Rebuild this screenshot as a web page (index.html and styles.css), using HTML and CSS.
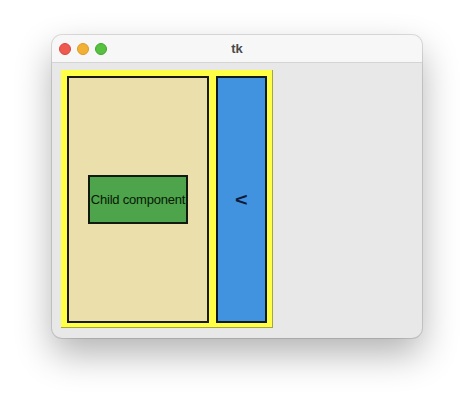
FILE: index.html
```html
<!DOCTYPE html>
<html>
<head>
<meta charset="utf-8">
<link rel="stylesheet" href="styles.css">
</head>
<body>
<div class="window">
  <div class="titlebar">
    <div class="lights">
      <span class="light red"></span>
      <span class="light amber"></span>
      <span class="light green"></span>
    </div>
    <div class="title">tk</div>
  </div>
  <div class="content">
    <div class="frame">
      <div class="panel">
        <div class="child">Child component</div>
      </div>
      <div class="side"><span class="arrow">&lt;</span></div>
    </div>
  </div>
</div>
</body>
</html>
```

FILE: styles.css
```css
html, body {
  margin: 0;
  padding: 0;
  background: #ffffff;
}
body {
  width: 474px;
  height: 407px;
  padding: 35px 0 0 52px;
  box-sizing: border-box;
  font-family: "Liberation Sans", Arial, sans-serif;
}
.window {
  width: 370px;
  height: 303px;
  border-radius: 10px;
  background: #e8e8e8;
  box-shadow: 0 0 0 1px rgba(0, 0, 0, 0.12), 0 16px 36px rgba(0, 0, 0, 0.3);
  overflow: hidden;
  display: flex;
  flex-direction: column;
}
.titlebar {
  height: 27px;
  flex: none;
  background: #f7f7f7;
  border-bottom: 1px solid #d4d4d4;
  position: relative;
  display: flex;
  align-items: center;
}
.lights {
  display: flex;
  gap: 6px;
  padding-left: 7px;
}
.light {
  width: 12px;
  height: 12px;
  border-radius: 50%;
  box-sizing: border-box;
}
.red { background: #ee5a50; border: 1px solid #d9463d; }
.amber { background: #f2b035; border: 1px solid #d99b25; }
.green { background: #56c23f; border: 1px solid #43a52f; }
.title {
  position: absolute;
  left: 0;
  right: 0;
  top: 0;
  bottom: 0;
  display: flex;
  align-items: center;
  justify-content: center;
  font-weight: bold;
  font-size: 13px;
  color: #4a4a4a;
}
.content {
  flex: 1;
  padding: 7px 0 0 9px;
}
.frame {
  width: 212px;
  height: 258px;
  box-sizing: border-box;
  background: #ffff45;
  border-right: 1px solid #a6a63a;
  border-bottom: 1px solid #a6a63a;
  padding: 6px 5px 4px 6px;
  display: flex;
  gap: 7px;
}
.panel {
  width: 142px;
  height: 247px;
  box-sizing: border-box;
  background: #ebe0ab;
  border: 2px solid #1a1a12;
  display: flex;
  align-items: center;
  justify-content: center;
}
.child {
  width: 100px;
  height: 49px;
  box-sizing: border-box;
  background: #4ea44b;
  border: 2px solid #111a10;
  display: flex;
  align-items: center;
  justify-content: center;
  font-size: 13px;
  letter-spacing: -0.2px;
  color: #061806;
  white-space: nowrap;
}
.side {
  width: 51px;
  height: 247px;
  box-sizing: border-box;
  background: #4193e0;
  border: 2px solid #101820;
  display: flex;
  align-items: center;
  justify-content: center;
}
.arrow {
  font-size: 18px;
  font-weight: bold;
  color: #0d1a3a;
  transform: scaleX(1.2);
  margin-top: 2px;
}
```
